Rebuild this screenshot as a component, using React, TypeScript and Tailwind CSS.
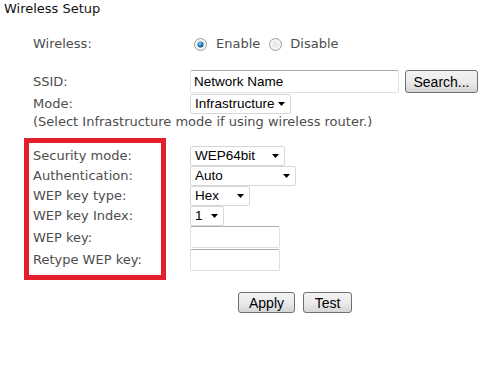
import type { ReactNode } from "react";

const labelFont = "font-['DejaVu_Sans',Verdana,sans-serif] text-[13px] text-[#4d4d4d]";
const ctrlFont = "font-['Liberation_Sans',Arial,sans-serif] text-[13.5px] text-black";

function Caret() {
  return (
    <svg width="7" height="4" viewBox="0 0 7 4" className="shrink-0">
      <polygon points="0,0 7,0 3.5,4" fill="#000" />
    </svg>
  );
}

function Select({ value, width }: { value: string; width: number }) {
  return (
    <div
      className={`flex items-center justify-between h-[20px] pl-[4px] pr-[5px] border border-[#d4d7dc] rounded-[2px] bg-white leading-none ${ctrlFont}`}
      style={{ width }}
    >
      <span>{value}</span>
      <Caret />
    </div>
  );
}

function TextBox({ width, height, children }: { width: number; height: number; children?: ReactNode }) {
  return (
    <div
      className={`flex items-center pl-[3px] border border-[#dde1e6] border-t-[#abadb3] rounded-[2px] bg-white leading-none ${ctrlFont}`}
      style={{ width, height }}
    >
      {children}
    </div>
  );
}

function Button({ label, width, height }: { label: string; width: number; height: number }) {
  return (
    <button
      className={`flex items-center justify-center border border-[#707070] rounded-[3px] bg-gradient-to-b from-[#f2f2f2] via-[#ebebeb] to-[#d6d6d6] leading-none font-['Liberation_Sans',Arial,sans-serif] text-[14px] text-black`}
      style={{ width, height }}
    >
      {label}
    </button>
  );
}

function Radio({ checked }: { checked: boolean }) {
  return (
    <svg width="13" height="13" viewBox="0 0 13 13" className="shrink-0">
      <defs>
        <radialGradient id="rfill" cx="0.5" cy="0.5" r="0.6">
          <stop offset="0" stopColor="#e6e6e6" />
          <stop offset="1" stopColor="#fdfdfd" />
        </radialGradient>
        <radialGradient id="rdot" cx="0.4" cy="0.35" r="0.7">
          <stop offset="0" stopColor="#8fd0f5" />
          <stop offset="0.5" stopColor="#2a86c8" />
          <stop offset="1" stopColor="#0d3e6b" />
        </radialGradient>
      </defs>
      <circle cx="6.5" cy="6.5" r="6" fill="url(#rfill)" stroke="#9a9a9a" strokeWidth="1" />
      {checked && <circle cx="6.5" cy="6.5" r="3" fill="url(#rdot)" />}
    </svg>
  );
}

const boxRows: [string, number][] = [
  ["Security mode:", 20],
  ["Authentication:", 20],
  ["WEP key type:", 20],
  ["WEP key Index:", 20],
  ["WEP key:", 23],
  ["Retype WEP key:", 22],
];

export default function App() {
  return (
    <div className="w-[497px] h-[366px] bg-white overflow-hidden">
      {/* Title */}
      <div className="pl-[4px] h-[18px] leading-[18px] font-['DejaVu_Sans',Verdana,sans-serif] text-[13px] text-[#111]">
        Wireless Setup
      </div>

      {/* Wireless on/off */}
      <div className="mt-[16px] flex items-center h-[20px]">
        <div className={`pl-[33px] w-[194px] ${labelFont}`}>Wireless:</div>
        <div className={`flex items-center ${labelFont}`}>
          <Radio checked />
          <span className="ml-[9px]">Enable</span>
          <span className="ml-[9px] flex items-center">
            <Radio checked={false} />
            <span className="ml-[8px]">Disable</span>
          </span>
        </div>
      </div>

      {/* SSID */}
      <div className="mt-[16px] flex items-center h-[23px]">
        <div className={`pl-[33px] w-[190px] ${labelFont}`}>SSID:</div>
        <TextBox width={209} height={23}>Network Name</TextBox>
        <div className="ml-[6px]">
          <Button label="Search..." width={73} height={23} />
        </div>
      </div>

      {/* Mode */}
      <div className="mt-[1px] flex items-center h-[20px]">
        <div className={`pl-[33px] w-[190px] ${labelFont}`}>Mode:</div>
        <Select value="Infrastructure" width={101} />
      </div>
      <div className={`pl-[33px] h-[16px] leading-[16px] ${labelFont}`}>
        (Select Infrastructure mode if using wireless router.)
      </div>

      {/* Security section */}
      <div className="mt-[8px] flex items-start">
        <div className="ml-[24px] w-[142px] border-[5px] border-[#e41f2b] pt-[3px] pb-[4px] pl-[4px]">
          {boxRows.map(([label, h]) => (
            <div key={label} className={`flex items-center whitespace-nowrap ${labelFont}`} style={{ height: h }}>
              {label}
            </div>
          ))}
        </div>
        <div className="ml-[24px] mt-[8px] flex flex-col">
          <Select value="WEP64bit" width={95} />
          <Select value="Auto" width={106} />
          <Select value="Hex" width={60} />
          <Select value="1" width={34} />
          <div className="mb-[1px]">
            <TextBox width={90} height={22} />
          </div>
          <TextBox width={90} height={22} />
        </div>
      </div>

      {/* Actions */}
      <div className="mt-[12px] ml-[238px] flex gap-[8px]">
        <Button label="Apply" width={57} height={21} />
        <Button label="Test" width={49} height={21} />
      </div>
    </div>
  );
}
